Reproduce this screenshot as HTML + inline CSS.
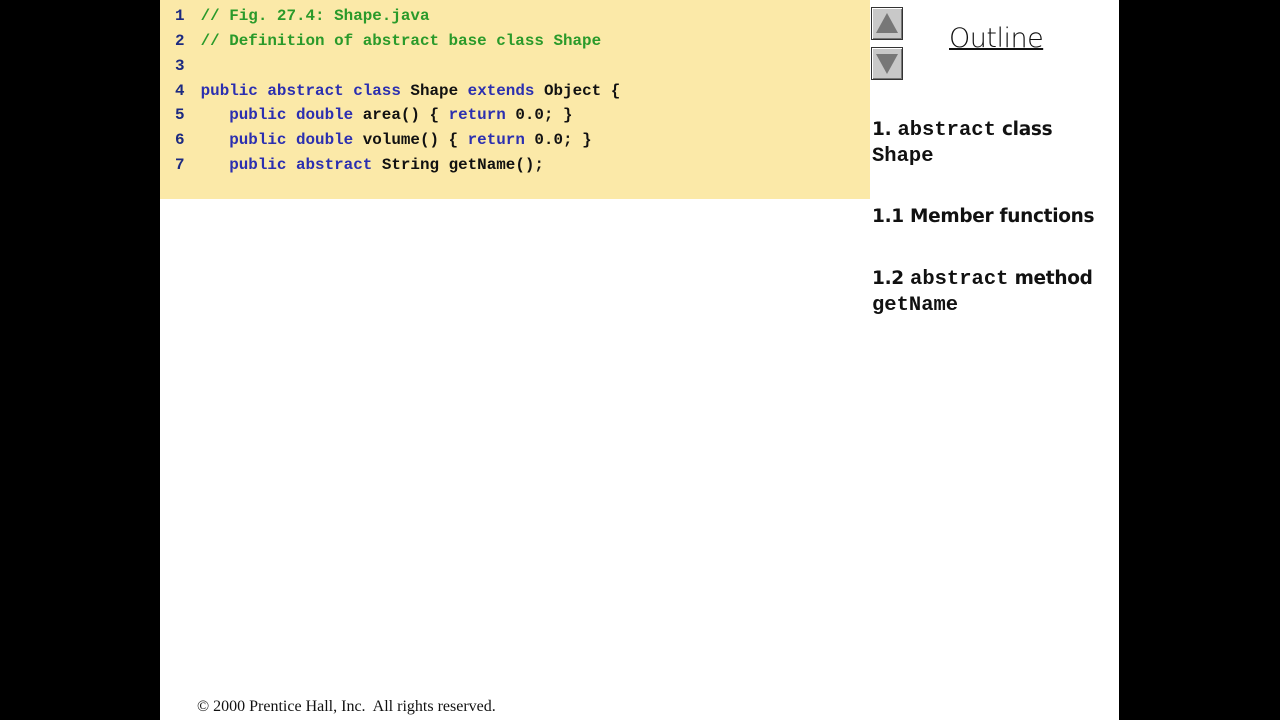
<!DOCTYPE html>
<html><head><style>
body{margin:0;width:1280px;height:720px;background:#000;position:relative;overflow:hidden}
#page{position:absolute;left:160px;top:0;width:959px;height:720px;background:#fff}
#code{position:absolute;left:0;top:0;width:710px;height:199px;background:#fbe9a8}
pre{position:absolute;left:12px;top:4px;margin:0;font:bold 15.9px/24.85px "Liberation Mono",monospace;color:#111}
.n{color:#1c2a80;position:relative;left:3px}.c{color:#2a9a2a}.k{color:#2b2fb0}
.btn{position:absolute;left:711px;width:30px;height:31px;background:#c8c8c8;border:1px solid #333;box-shadow:inset 1px 1px 0 #fff,inset -1px -1px 0 #777}
#out{position:absolute;left:789px;top:23px;font:27px "DejaVu Sans",sans-serif;font-weight:200;text-decoration:underline;text-decoration-thickness:2px;color:#111;letter-spacing:-0.5px}
.it{position:absolute;left:712px;font:bold 18.5px/26px "DejaVu Sans",sans-serif;color:#111;letter-spacing:-0.3px}
.it code{font:bold 20.5px "Liberation Mono",monospace;letter-spacing:0}
#copy{position:absolute;left:37px;top:698px;font:16px "Liberation Serif",serif;color:#111}
</style></head><body><div id="page">
<div id="code"><pre><span class="n">1</span>  <span class="c">// Fig. 27.4: Shape.java</span>
<span class="n">2</span>  <span class="c">// Definition of abstract base class Shape</span>
<span class="n">3</span>
<span class="n">4</span>  <span class="k">public abstract class</span> Shape <span class="k">extends</span> Object {
<span class="n">5</span>     <span class="k">public double</span> area() { <span class="k">return</span> 0.0; }
<span class="n">6</span>     <span class="k">public double</span> volume() { <span class="k">return</span> 0.0; }
<span class="n">7</span>     <span class="k">public abstract</span> String getName();</pre></div>
<div class="btn" style="top:7px"><svg width="30" height="31"><polygon points="15,5 26,25 4,25" fill="#777"/></svg></div>
<div class="btn" style="top:47px"><svg width="30" height="31"><polygon points="4,6 26,6 15,26" fill="#777"/></svg></div>
<div id="out">Outline</div>
<div class="it" style="top:117px">1. <code>abstract</code> class<br><code>Shape</code></div>
<div class="it" style="top:204px">1.1 Member functions</div>
<div class="it" style="top:266px">1.2 <code>abstract</code> method<br><code>getName</code></div>
<div id="copy">© 2000 Prentice Hall, Inc.&nbsp; All rights reserved.</div>
</div></body></html>
